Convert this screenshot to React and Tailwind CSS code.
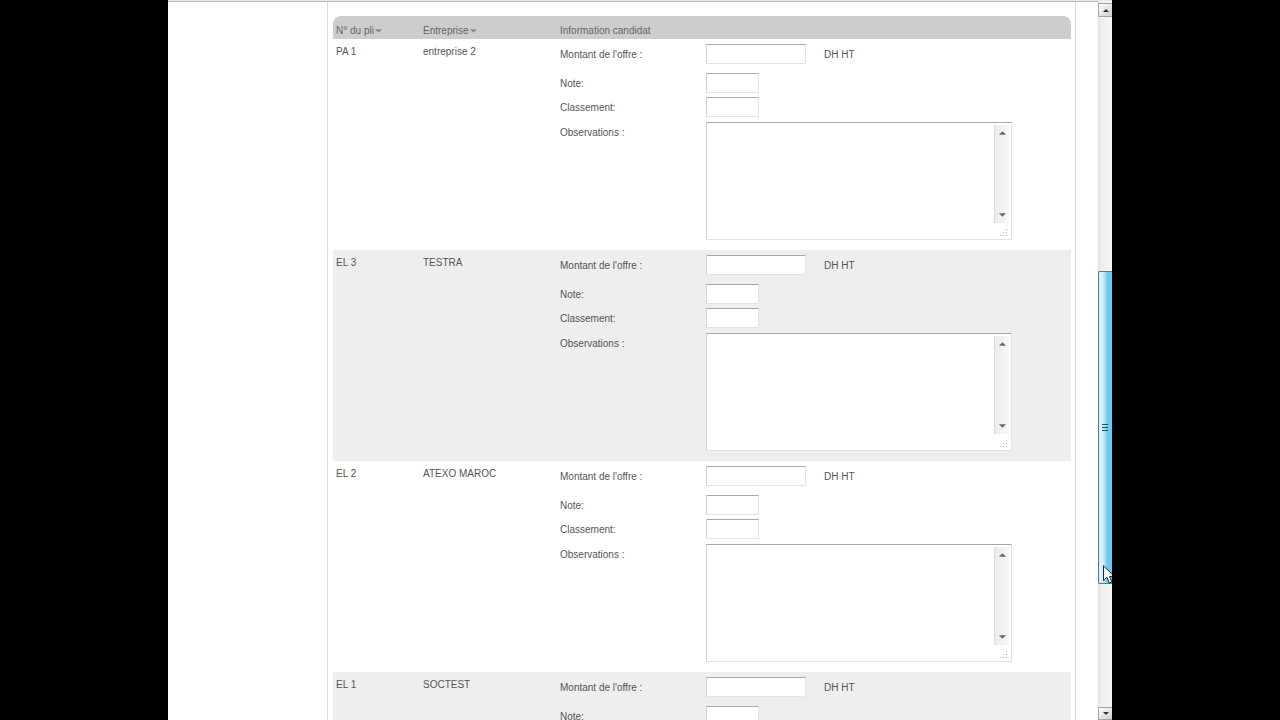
import { useState } from 'react';

const plis = [
  { id: 'pa1', numero: 'PA 1', entreprise: 'entreprise 2' },
  { id: 'el3', numero: 'EL 3', entreprise: 'TESTRA' },
  { id: 'el2', numero: 'EL 2', entreprise: 'ATEXO MAROC' },
  { id: 'el1', numero: 'EL 1', entreprise: 'SOCTEST' },
];

const fieldClass =
  'block h-5 border border-[#e4e4e4] border-t-[#a8a8a8] border-l-[#d4d4d4] bg-white px-1 outline-none';

function Arrow({ up, className }) {
  return (
    <svg viewBox="0 0 8 4" className={className} aria-hidden="true">
      <path d={up ? 'M0 4 L4 0 L8 4 Z' : 'M0 0 L4 4 L8 0 Z'} fill="currentColor" />
    </svg>
  );
}

function SortButton({ children }) {
  return (
    <button type="button" className="flex items-center gap-[1px]">
      {children}
      <Arrow className="h-[4px] w-[7px] text-[#8a8a8a]" />
    </button>
  );
}

function Observations({ id, value, onChange }) {
  return (
    <div className="flex h-[118px] w-[306px] border border-[#e2e2e2] border-t-[#a8a8a8] border-l-[#d4d4d4] bg-white">
      <textarea
        id={id}
        value={value}
        onChange={onChange}
        className="min-w-0 flex-1 resize-none overflow-hidden p-1 outline-none"
      />
      <div className="flex w-[17px] flex-col pt-[2px] pr-[2px]">
        <div className="flex h-[98px] flex-col items-center justify-between border-l border-[#dadada] bg-linear-to-r from-[#ececec] to-[#f8f8f8] py-[6px] text-[#666]">
          <Arrow up className="h-[4px] w-[7px]" />
          <Arrow className="h-[4px] w-[7px]" />
        </div>
        <svg viewBox="0 0 8 8" className="mt-[6px] ml-[6px] size-2" fill="#b5b5b5" aria-hidden="true">
          <rect x="6" y="0" width="1" height="1" />
          <rect x="3" y="3" width="1" height="1" />
          <rect x="6" y="3" width="1" height="1" />
          <rect x="0" y="6" width="1" height="1" />
          <rect x="3" y="6" width="1" height="1" />
          <rect x="6" y="6" width="1" height="1" />
        </svg>
      </div>
    </div>
  );
}

function PliRow({ pli, odd }) {
  const [form, setForm] = useState({ montant: '', note: '', classement: '', observations: '' });

  const handleChange = (field) => (e) => setForm({ ...form, [field]: e.target.value });

  return (
    <tr className={odd ? 'bg-[#eeeeee]' : 'bg-white'}>
      <td className="pt-[5px] pl-[3px] align-top leading-4">{pli.numero}</td>
      <td className="pt-[5px] pl-[3px] align-top leading-4">{pli.entreprise}</td>
      <td className="pt-[5px] pb-[10px] pl-[3px] align-top">
        <div className="mb-[9px] flex h-5">
          <label htmlFor={`${pli.id}-montant`} className="w-[146px] leading-[22px]">Montant de l'offre :</label>
          <div className="flex gap-[18px]">
            <input
              id={`${pli.id}-montant`}
              type="text"
              value={form.montant}
              onChange={handleChange('montant')}
              className={`${fieldClass} w-[100px]`}
            />
            <span className="leading-[22px]">DH HT</span>
          </div>
        </div>
        <div className="mb-1 flex h-5">
          <label htmlFor={`${pli.id}-note`} className="w-[146px] leading-[22px]">Note:</label>
          <input
            id={`${pli.id}-note`}
            type="text"
            value={form.note}
            onChange={handleChange('note')}
            className={`${fieldClass} w-[53px]`}
          />
        </div>
        <div className="mb-[5px] flex h-5">
          <label htmlFor={`${pli.id}-classement`} className="w-[146px] leading-[22px]">Classement:</label>
          <input
            id={`${pli.id}-classement`}
            type="text"
            value={form.classement}
            onChange={handleChange('classement')}
            className={`${fieldClass} w-[53px]`}
          />
        </div>
        <div className="flex">
          <label htmlFor={`${pli.id}-observations`} className="w-[146px] leading-[22px]">Observations :</label>
          <Observations
            id={`${pli.id}-observations`}
            value={form.observations}
            onChange={handleChange('observations')}
          />
        </div>
      </td>
    </tr>
  );
}

function PageScrollbar() {
  return (
    <div className="relative flex w-[14px] shrink-0 flex-col overflow-hidden bg-linear-to-r from-[#e2e2e2] via-[#eeeeee] via-20% to-[#f7f7f7] pt-[2px]">
      <button
        type="button"
        aria-label="Défiler vers le haut"
        className="flex h-[14px] items-center justify-center border border-r-0 border-[#a5a5a5] bg-linear-to-br from-white to-[#cfcfcf] text-[#333]"
      >
        <Arrow up className="h-[3px] w-[6px]" />
      </button>
      <div className="flex-[255]" />
      <div className="flex flex-[312] flex-col items-center justify-center gap-[2px] rounded-l-xs border border-r-0 border-[#4a7f98] bg-linear-to-r from-[#d8f1fb] from-25% via-[#a0def3] via-50% to-[#6ccbea] to-60% pr-[2px]">
        <span className="h-px w-[6px] bg-[#1f5068]" />
        <span className="h-px w-[6px] bg-[#1f5068]" />
        <span className="h-px w-[6px] bg-[#1f5068]" />
      </div>
      <div className="flex-[123]" />
      <button
        type="button"
        aria-label="Défiler vers le bas"
        className="flex h-[13px] items-center justify-center border border-r-0 border-[#a5a5a5] bg-linear-to-br from-white to-[#cfcfcf] text-[#333]"
      >
        <Arrow className="h-[3px] w-[6px]" />
      </button>
      {/* mouse pointer */}
      <svg viewBox="0 0 12 19" className="absolute top-[564px] left-[5px] h-[19px] w-[12px]" aria-hidden="true">
        <path d="M0.5 0.8 V15.5 L4 12.3 L6.4 18 L8.9 17 L6.5 11.4 H11.3 Z" fill="#fff" stroke="#1b2b33" />
      </svg>
    </div>
  );
}

function App() {
  return (
    <div className="h-screen overflow-hidden bg-black px-[168px] font-['Liberation_Sans',Arial,sans-serif] text-[10px] text-[#555]">
      <div className="flex h-full border-t border-[#e3eaea] bg-white">
        <div className="flex min-w-0 flex-1 flex-col overflow-hidden border-t border-[#b4c0c0] pr-[22px] pl-[159px]">
          <main className="flex-1 border-x border-[#dcdcdc] pt-[14px] pr-1 pl-[5px]">
            <table className="w-full table-fixed border-collapse">
              <colgroup>
                <col className="w-[87px]" />
                <col className="w-[137px]" />
                <col />
              </colgroup>
              <thead>
                <tr className="h-[23px] text-left leading-4 text-[#666]">
                  <th className="rounded-tl-lg bg-[#cdcdcd] pt-[7px] pl-[3px] font-normal">
                    <SortButton>N° du pli</SortButton>
                  </th>
                  <th className="bg-[#cdcdcd] pt-[7px] pl-[3px] font-normal">
                    <SortButton>Entreprise</SortButton>
                  </th>
                  <th className="rounded-tr-lg bg-[#cdcdcd] pt-[7px] pl-[3px] font-normal">
                    Information candidat
                  </th>
                </tr>
              </thead>
              <tbody>
                {plis.map((pli, index) => (
                  <PliRow key={pli.id} pli={pli} odd={index % 2 === 1} />
                ))}
              </tbody>
            </table>
          </main>
        </div>
        <PageScrollbar />
      </div>
    </div>
  );
}

export default App;
